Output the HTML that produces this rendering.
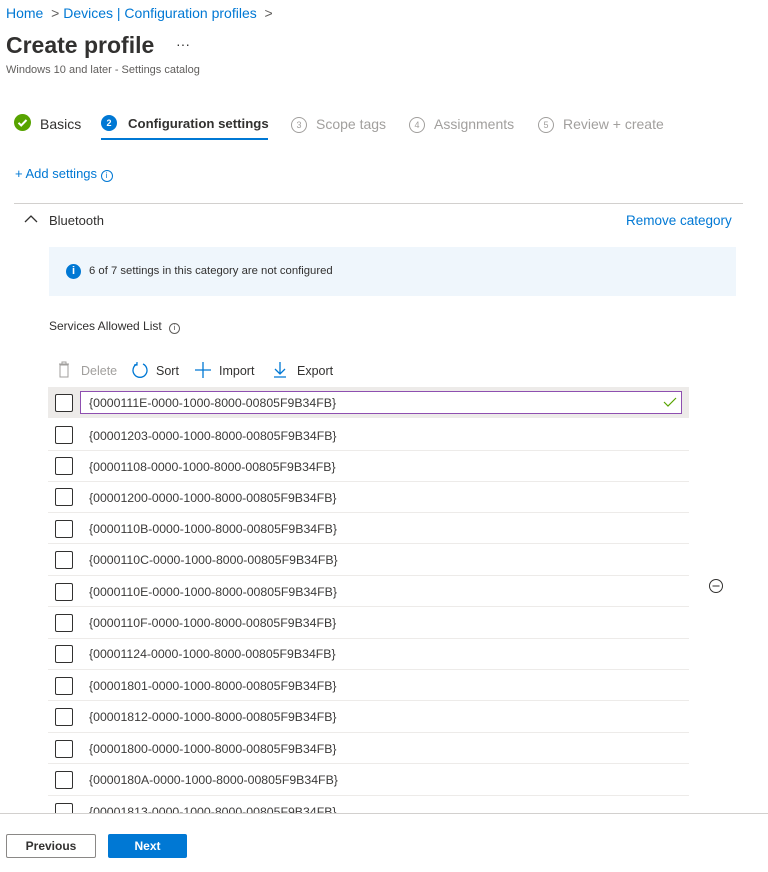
<!DOCTYPE html>
<html><head><style>
body{margin:0;width:768px;height:871px;overflow:hidden;background:#fff;font-family:"Liberation Sans",sans-serif;color:#323130;position:relative}
.a{position:absolute;white-space:nowrap}
.link{color:#0078d4}
.cb{position:absolute;left:55px;width:16px;height:16px;border:1px solid #323130;border-radius:2px;background:#fff}
.row{position:absolute;left:48px;width:641px;height:31px;border-bottom:1px solid #edebe9}
.rt{position:absolute;left:89px;font-size:12.3px;color:#3b3a39}
.step{font-size:14px;color:#a19f9d}
.circ{display:inline-block;width:14px;height:14px;border:1px solid #a19f9d;border-radius:50%;font-size:9px;text-align:center;line-height:14px;vertical-align:1px;margin-right:9px}
</style></head><body>
<div class="a" style="left:6px;top:5px;font-size:14px"><span class="link">Home</span> <span style="color:#605e5c">&nbsp;&gt;&nbsp;</span><span class="link">Devices | Configuration profiles</span> <span style="color:#605e5c">&nbsp;&gt;</span></div>
<div class="a" style="left:6px;top:32px;font-size:23px;font-weight:600;color:#323130">Create profile</div>
<div class="a" style="left:176px;top:36px;font-size:14px">···</div>
<div class="a" style="left:6px;top:64px;font-size:11px;color:#605e5c">Windows 10 and later - Settings catalog</div>

<div class="a" style="left:14px;top:114px;width:17px;height:17px;border-radius:50%;background:#57a300"></div>
<svg class="a" style="left:14px;top:114px" width="17" height="17"><path d="M4.5 8.8l2.7 2.7 5.3-5.5" stroke="#fff" stroke-width="2" fill="none"/></svg>
<div class="a" style="left:40px;top:116px;font-size:14px">Basics</div>
<div class="a" style="left:101px;top:115px;width:16px;height:16px;border-radius:50%;background:#0078d4;color:#fff;font-size:9px;text-align:center;line-height:16px;font-weight:bold">2</div>
<div class="a" style="left:128px;top:116px;font-size:13.2px;font-weight:600">Configuration settings</div>
<div class="a" style="left:101px;top:138px;width:167px;height:2px;background:#0078d4"></div>
<div class="a step" style="left:291px;top:116px"><span class="circ">3</span>Scope tags</div>
<div class="a step" style="left:409px;top:116px"><span class="circ">4</span>Assignments</div>
<div class="a step" style="left:538px;top:116px"><span class="circ">5</span>Review + create</div>

<div class="a link" style="left:15px;top:166px;font-size:13px">+ Add settings <span style="border:1px solid #0078d4;border-radius:50%;display:inline-block;width:10px;height:10px;line-height:10px;text-align:center;font-size:8px">i</span></div>
<div class="a" style="left:14px;top:203px;width:729px;height:1px;background:#d2d0ce"></div>
<svg class="a" style="left:24px;top:214px" width="14" height="10"><path d="M1 8l6-6 6 6" stroke="#323130" stroke-width="1.3" fill="none"/></svg>
<div class="a" style="left:49px;top:213px;font-size:13px">Bluetooth</div>
<div class="a link" style="left:626px;top:213px;font-size:13.5px">Remove category</div>
<div class="a" style="left:49px;top:247px;width:687px;height:49px;background:#eff6fc"></div>
<div class="a" style="left:66px;top:264px;width:15px;height:15px;border-radius:50%;background:#0078d4;color:#fff;font-size:11px;font-weight:bold;text-align:center;line-height:15px">i</div>
<div class="a" style="left:89px;top:265px;font-size:11.3px">6 of 7 settings in this category are not configured</div>
<div class="a" style="left:49px;top:319px;font-size:12px">Services Allowed List <span style="border:1px solid #605e5c;border-radius:50%;display:inline-block;width:9px;height:9px;line-height:9px;text-align:center;font-size:7px;margin-left:4px">i</span></div>

<svg class="a" style="left:57px;top:361px" width="14" height="17"><path d="M2 3h10M5 3V1h4v2M3 4h8v12H3z" stroke="#a19f9d" fill="none"/></svg>
<div class="a" style="left:81px;top:364px;font-size:12.5px;color:#a19f9d">Delete</div>
<svg class="a" style="left:131px;top:361px" width="18" height="18"><path d="M6 3A7 7 0 1 0 12 3" stroke="#0078d4" stroke-width="1.3" fill="none"/><path d="M6 1v3H3" stroke="#0078d4" stroke-width="1.2" fill="none"/></svg>
<div class="a" style="left:156px;top:364px;font-size:12.5px">Sort</div>
<svg class="a" style="left:195px;top:362px" width="16" height="16"><path d="M8 0v16M0 8h16" stroke="#0078d4" stroke-width="1.3"/></svg>
<div class="a" style="left:219px;top:364px;font-size:12.5px">Import</div>
<svg class="a" style="left:274px;top:361px" width="12" height="17"><path d="M6 1v12M1 8l5 5 5-5M0 16h12" stroke="#0078d4" stroke-width="1.3" fill="none"/></svg>
<div class="a" style="left:297px;top:364px;font-size:12.5px">Export</div>

<div class="a" style="left:48px;top:387px;width:641px;height:31px;background:#edebe9"></div>
<div class="cb" style="top:394px"></div>
<div class="a" style="left:80px;top:391px;width:600px;height:21px;border:1px solid #8e4fb0;background:#fff"></div>
<div class="rt" style="top:396px">{0000111E-0000-1000-8000-00805F9B34FB}</div>
<svg class="a" style="left:663px;top:396px" width="14" height="12"><path d="M1 6l4 4 8-8" stroke="#57a300" stroke-width="1.2" fill="none"/></svg>

<div class="row" style="top:419px"></div><div class="cb" style="top:426px"></div><div class="rt" style="top:429px">{00001203-0000-1000-8000-00805F9B34FB}</div>
<div class="row" style="top:450px"></div><div class="cb" style="top:457px"></div><div class="rt" style="top:460px">{00001108-0000-1000-8000-00805F9B34FB}</div>
<div class="row" style="top:481px"></div><div class="cb" style="top:488px"></div><div class="rt" style="top:491px">{00001200-0000-1000-8000-00805F9B34FB}</div>
<div class="row" style="top:512px"></div><div class="cb" style="top:520px"></div><div class="rt" style="top:522px">{0000110B-0000-1000-8000-00805F9B34FB}</div>
<div class="row" style="top:544px"></div><div class="cb" style="top:551px"></div><div class="rt" style="top:553px">{0000110C-0000-1000-8000-00805F9B34FB}</div>
<div class="row" style="top:575px"></div><div class="cb" style="top:583px"></div><div class="rt" style="top:585px">{0000110E-0000-1000-8000-00805F9B34FB}</div>
<div class="row" style="top:607px"></div><div class="cb" style="top:614px"></div><div class="rt" style="top:616px">{0000110F-0000-1000-8000-00805F9B34FB}</div>
<div class="row" style="top:638px"></div><div class="cb" style="top:645px"></div><div class="rt" style="top:647px">{00001124-0000-1000-8000-00805F9B34FB}</div>
<div class="row" style="top:669px"></div><div class="cb" style="top:677px"></div><div class="rt" style="top:679px">{00001801-0000-1000-8000-00805F9B34FB}</div>
<div class="row" style="top:701px"></div><div class="cb" style="top:708px"></div><div class="rt" style="top:710px">{00001812-0000-1000-8000-00805F9B34FB}</div>
<div class="row" style="top:732px"></div><div class="cb" style="top:740px"></div><div class="rt" style="top:742px">{00001800-0000-1000-8000-00805F9B34FB}</div>
<div class="row" style="top:764px"></div><div class="cb" style="top:771px"></div><div class="rt" style="top:773px">{0000180A-0000-1000-8000-00805F9B34FB}</div>
<div class="cb" style="top:803px"></div><div class="rt" style="top:805px">{00001813-0000-1000-8000-00805F9B34FB}</div>

<svg class="a" style="left:708px;top:578px" width="16" height="16"><circle cx="8" cy="8" r="6.5" stroke="#323130" fill="none"/><path d="M4.5 8h7" stroke="#323130"/></svg>

<div class="a" style="left:0;top:813px;width:768px;height:58px;background:#fff;border-top:1px solid #d2d0ce"></div>
<div class="a" style="left:6px;top:834px;width:88px;height:22px;border:1px solid #8a8886;border-radius:2px;font-size:12px;font-weight:600;text-align:center;line-height:22px">Previous</div>
<div class="a" style="left:108px;top:834px;width:79px;height:24px;background:#0078d4;border-radius:2px;color:#fff;font-size:12px;font-weight:600;text-align:center;line-height:24px">Next</div>
</body></html>
